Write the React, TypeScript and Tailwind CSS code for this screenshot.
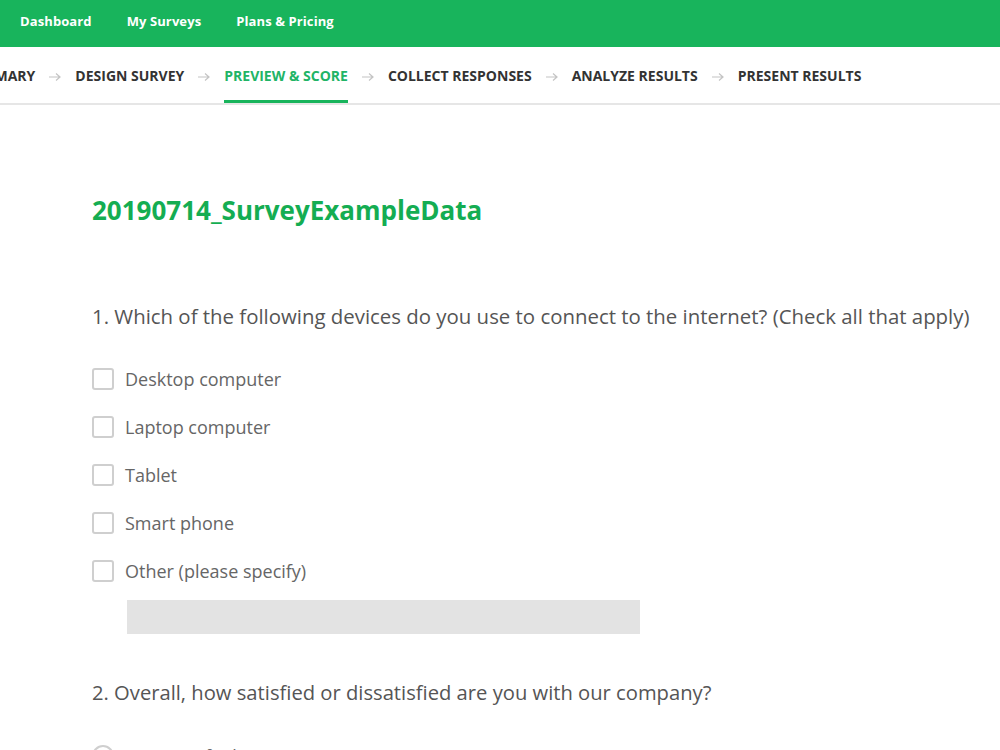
import React from "react";

const Arrow = () => (
  <svg width="14" height="10" viewBox="0 0 14 10" className="shrink-0" fill="none" stroke="#c4c4c4" strokeWidth="1.2">
    <path d="M1 5h11M8 1.5L12 5 8 8.5" />
  </svg>
);

const steps = ["SUMMARY", "DESIGN SURVEY", "PREVIEW & SCORE", "COLLECT RESPONSES", "ANALYZE RESULTS", "PRESENT RESULTS"];
const options = ["Desktop computer", "Laptop computer", "Tablet", "Smart phone", "Other (please specify)"];

export default function App() {
  return (
    <div className="w-[1000px] h-[750px] overflow-hidden bg-white" style={{ fontFamily: '"Open Sans", "Noto Sans", sans-serif' }}>
      <div className="h-[47px] bg-[#18b45c] flex items-center pl-[20px] pb-[4px] gap-[35px] text-white font-bold text-[13px] tracking-[0.1px]">
        <span>Dashboard</span>
        <span>My Surveys</span>
        <span>Plans &amp; Pricing</span>
      </div>
      <div className="h-[58px] border-b-2 border-[#e6e6e6] overflow-hidden">
        <div className="flex items-stretch h-full ml-[-37px] text-[14px] font-bold text-[#333] whitespace-nowrap">
          {steps.map((s, i) => (
            <React.Fragment key={s}>
              {i > 0 && (
                <div className="flex items-center px-[13px] pt-[3px]">
                  <Arrow />
                </div>
              )}
              <div className={"flex items-center pt-[3px] border-b-[3px] " + (s === "PREVIEW & SCORE" ? "border-[#18b45c] text-[#21b466]" : "border-transparent")}>
                {s}
              </div>
            </React.Fragment>
          ))}
        </div>
      </div>
      <div className="pl-[92px] pt-[92px]">
        <h1 className="text-[26px] font-bold text-[#14ad52] leading-none">20190714_SurveyExampleData</h1>
        <p className="mt-[83px] text-[20.4px] text-[#555] leading-none whitespace-nowrap">
          1. Which of the following devices do you use to connect to the internet? (Check all that apply)
        </p>
        <div className="mt-[42px] flex flex-col gap-[26px]">
          {options.map((o) => (
            <div key={o} className="flex items-center gap-[11px] h-[22px]">
              <div className="w-[22px] h-[22px] border-2 border-[#cfcfcf] rounded-[3px]" />
              <span className="text-[18px] text-[#666]">{o}</span>
            </div>
          ))}
        </div>
        <div className="ml-[35px] mt-[18px] w-[513px] h-[34px] bg-[#e3e3e3]" />
        <p className="mt-[48px] text-[20.2px] text-[#555] leading-none whitespace-nowrap">
          2. Overall, how satisfied or dissatisfied are you with our company?
        </p>
        <div className="mt-[40px] flex items-center gap-[11px]">
          <div className="w-[22px] h-[22px] border-2 border-[#cfcfcf] rounded-full" />
          <span className="text-[18px] text-[#666]">Very satisfied</span>
        </div>
      </div>
    </div>
  );
}
